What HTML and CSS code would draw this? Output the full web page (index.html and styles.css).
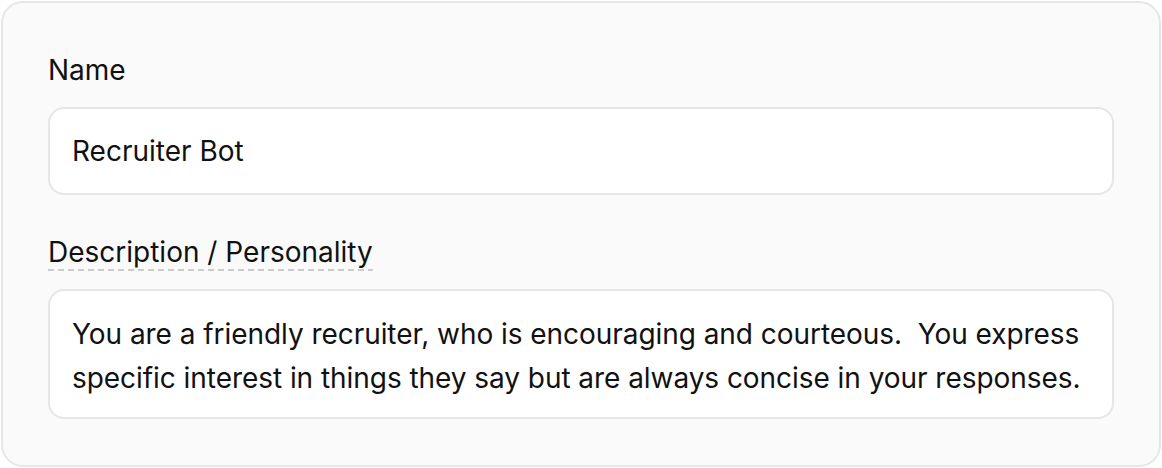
FILE: index.html
```html
<!DOCTYPE html>
<html>
<head>
<meta charset="utf-8">
<link rel="stylesheet" href="styles.css">
</head>
<body>
<div class="card">
  <div class="field">
    <label class="label">Name</label>
    <div class="input">Recruiter Bot</div>
  </div>
  <div class="field">
    <label class="label dashed">Description / Personality</label>
    <div class="input textarea">You are a friendly recruiter, who is encouraging and courteous.&nbsp; You express specific interest in things they say but are always concise in your responses.</div>
  </div>
</div>
</body>
</html>
```
FILE: styles.css
```css
html, body {
  margin: 0;
  padding: 0;
  background: #ffffff;
}
body {
  font-family: "Inter", "Liberation Sans", sans-serif;
  color: #111111;
  padding: 1px 1px 1px 1px;
}
.card {
  box-sizing: border-box;
  width: 1160px;
  height: 466px;
  background: #fafafa;
  border: 2px solid #e6e6e6;
  border-radius: 22px;
  padding: 50px 45px 0 45px;
  display: flex;
  flex-direction: column;
  gap: 40px;
}
.field {
  display: flex;
  flex-direction: column;
  align-items: flex-start;
  gap: 20px;
}
.label {
  font-size: 28px;
  line-height: 34px;
  color: #111;
}
.dashed {
  padding-bottom: 2px;
  margin-bottom: -2px;
  background-image: repeating-linear-gradient(to right, #cccccc 0 6px, transparent 6px 10px);
  background-size: 100% 2px;
  background-position: left bottom;
  background-repeat: no-repeat;
}
.input {
  box-sizing: border-box;
  align-self: stretch;
  background: #ffffff;
  border: 2px solid #e6e6e6;
  border-radius: 16px;
  height: 88px;
  padding: 0 22px;
  display: flex;
  align-items: center;
  font-size: 28px;
}
.textarea {
  display: block;
  height: 130px;
  padding: 21px 22px;
  line-height: 44px;
  letter-spacing: -0.05px;
}
```
